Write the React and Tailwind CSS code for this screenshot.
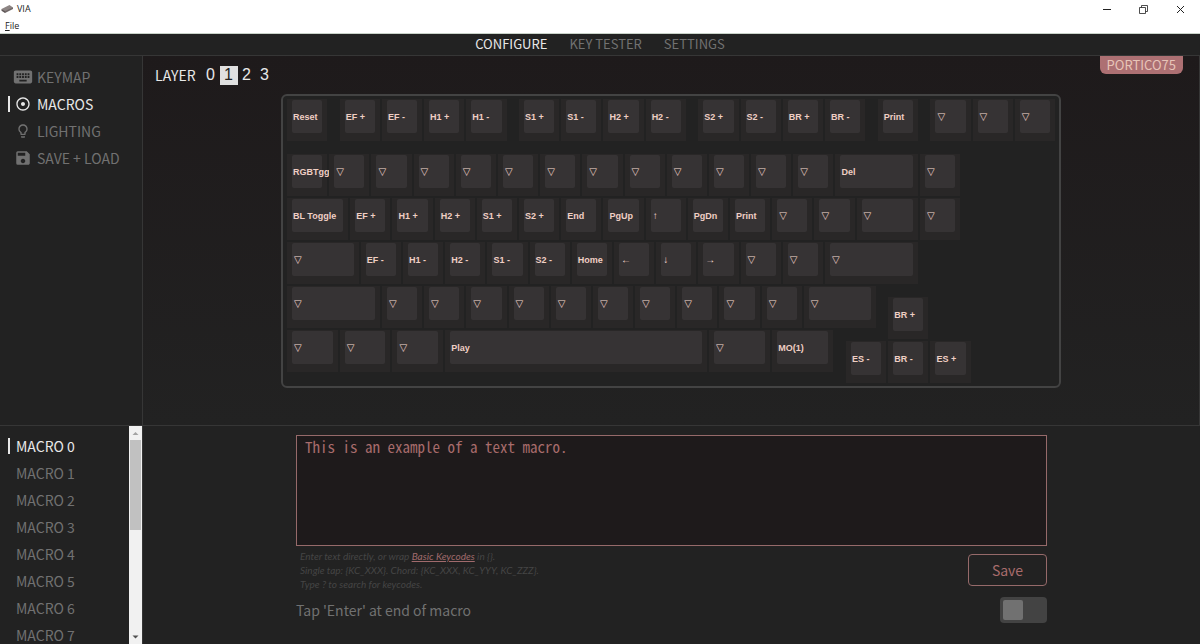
import React, { useState } from "react";
import { MdAdjust, MdKeyboard, MdLightbulbOutline, MdSave } from "react-icons/md";

const TABS = ["Configure", "Key Tester", "Settings"];

const MENU = [
  { id: "keymap", label: "Keymap", icon: MdKeyboard, iconClass: "size-[22px] shrink-0" },
  { id: "macros", label: "Macros", icon: MdAdjust, iconClass: "size-4 shrink-0" },
  { id: "lighting", label: "Lighting", icon: MdLightbulbOutline, iconClass: "size-4 shrink-0" },
  { id: "save", label: "Save + Load", icon: MdSave, iconClass: "size-[18px] shrink-0" },
];

const LAYERS = [0, 1, 2, 3];
const MACROS = [0, 1, 2, 3, 4, 5, 6, 7];

// Rows are measured in quarter key units: [start x, start y, keys].
// A key is a legend (1u) or a [legend, width] pair.
const BLANK = "▽";
const SYMBOLS = [BLANK, "↑", "↓", "←", "→"];
const KEY_GROUPS = [
  [0, 0, ["Reset"]],
  [5, 0, ["EF +", "EF -", "H1 +", "H1 -"]],
  [22, 0, ["S1 +", "S1 -", "H2 +", "H2 -"]],
  [39, 0, ["S2 +", "S2 -", "BR +", "BR -"]],
  [56, 0, ["Print"]],
  [61, 0, [BLANK, BLANK, BLANK]],
  [0, 5, ["RGBTgg", ...Array(12).fill(BLANK), ["Del", 8], BLANK]],
  [
    0,
    9,
    [
      ["BL Toggle", 6],
      "EF +",
      "H1 +",
      "H2 +",
      "S1 +",
      "S2 +",
      "End",
      "PgUp",
      "↑",
      "PgDn",
      "Print",
      BLANK,
      BLANK,
      [BLANK, 6],
      BLANK,
    ],
  ],
  [
    0,
    13,
    [
      [BLANK, 7],
      "EF -",
      "H1 -",
      "H2 -",
      "S1 -",
      "S2 -",
      "Home",
      "←",
      "↓",
      "→",
      BLANK,
      BLANK,
      [BLANK, 9],
    ],
  ],
  [0, 17, [[BLANK, 9], ...Array(10).fill(BLANK), [BLANK, 7]]],
  [57, 18, ["BR +"]],
  [0, 21, [[BLANK, 5], [BLANK, 5], [BLANK, 5], ["Play", 25], [BLANK, 6], ["MO(1)", 6]]],
  [53, 22, ["ES -", "BR -", "ES +"]],
];

const KEYS = KEY_GROUPS.flatMap(([startX, y, keys]) => {
  let x = startX;
  return keys.map((key) => {
    const [legend, width] = Array.isArray(key) ? key : [key, 4];
    const placed = { legend, width, x, y };
    x += width;
    return placed;
  });
});

const TitleBar = () => (
  <header className="h-[34px] shrink-0 border-b border-[#c9d3c9] bg-white font-['Open_Sans',sans-serif] text-[9px] text-[#222]">
    <div className="flex h-[18px] items-center justify-between pl-px">
      <div className="flex items-center gap-1">
        <svg viewBox="0 0 12 10" className="h-[10px] w-3" aria-hidden="true">
          <path d="M0.5 5 8.5 1 12 3.5 4 8.5Z" fill="#8d8584" />
          <path d="M0.5 5 4 7.2V9L0.5 6.8Z" fill="#5d5556" />
          <path d="M4 7.2 12 3.2V5L4 9Z" fill="#6f6767" />
        </svg>
        <span>VIA</span>
      </div>
      <div className="flex items-center gap-7 pr-[15px]">
        <button type="button" aria-label="Minimize">
          <svg viewBox="0 0 9 9" className="size-[9px]" stroke="#222">
            <path d="M1 4.5h8" />
          </svg>
        </button>
        <button type="button" aria-label="Restore">
          <svg viewBox="0 0 9 9" className="size-[9px]" fill="none" stroke="#222">
            <path d="M0.5 2.500h6v6h-6zM2.500 2.500v-2h6v6h-2" strokeWidth="0.8" />
          </svg>
        </button>
        <button type="button" aria-label="Close">
          <svg viewBox="0 0 9 9" className="size-[9px]" stroke="#222">
            <path d="M1 1l7 7M8 1l-7 7" />
          </svg>
        </button>
      </div>
    </div>
    <button type="button" className="block h-[15px] px-[5px] leading-[15px]">
      <span className="underline">F</span>ile
    </button>
  </header>
);

const Key = ({ legend, width, x, y }) => (
  <button
    type="button"
    className="m-px bg-[#292727] px-[5px] pt-px pb-[8px] text-left"
    style={{ gridColumn: `${x + 1} / span ${width}`, gridRow: `${y + 1} / span 4` }}
  >
    <span
      className={
        SYMBOLS.includes(legend)
          ? "block h-[33px] rounded-xs bg-[#363334] pl-[2px] font-['Liberation_Sans','DejaVu_Sans',sans-serif] text-[10px] leading-[33px] font-bold text-[#f8ddd2]"
          : "block h-[33px] rounded-xs bg-[#363334] pl-px font-['Liberation_Sans',sans-serif] text-[9px] leading-[34px] font-bold whitespace-nowrap text-[#f0cfc4]"
      }
    >
      {legend}
    </span>
  </button>
);

const Board = () => (
  <div className="grid w-full max-w-[780px] auto-rows-[11px] grid-cols-[repeat(73,minmax(0,1fr))] rounded-md border-2 border-[#434343] bg-[#222] px-[3px] py-[2px]">
    {KEYS.map((key) => (
      <Key key={`${key.x}-${key.y}`} {...key} />
    ))}
  </div>
);

const MenuRow = ({ selected, onClick, children }) => (
  <li className="flex h-[27px] items-center">
    <button
      type="button"
      onClick={onClick}
      className={
        selected
          ? "flex h-4 items-center border-l-2 border-[#e8e8e8] pl-1.5 text-[#e8e8e8]"
          : "flex h-4 items-center border-l-2 border-transparent pl-1.5 text-[#717171]"
      }
    >
      {children}
    </button>
  </li>
);

const Scrollbar = () => (
  <div className="flex w-[13px] shrink-0 flex-col items-center bg-[#f1f1f1]" aria-hidden="true">
    <svg viewBox="0 0 13 14" className="h-[14px] w-[13px] shrink-0" fill="#a3a3a3">
      <path d="M3.5 9h6L6.5 6Z" />
    </svg>
    <div className="h-[90px] w-[11px] bg-[#c1c1c1]" />
    <svg viewBox="0 0 13 14" className="mt-auto h-[14px] w-[13px] shrink-0" fill="#505050">
      <path d="M3.5 5.5h6L6.5 8.5Z" />
    </svg>
  </div>
);

const MacroEditor = () => {
  const [text, setText] = useState("This is an example of a text macro.");
  const [tapEnter, setTapEnter] = useState(false);

  return (
    <form
      onSubmit={(event) => event.preventDefault()}
      className="mx-auto w-full max-w-[751px] pt-[9px]"
    >
      <textarea
        aria-label="Macro text"
        spellCheck={false}
        value={text}
        onChange={(event) => setText(event.target.value)}
        className="block h-[111px] w-full resize-none border border-[#966a6a] bg-[#1e1a1b] px-2 py-[3px] font-['Noto_Sans_Mono_CJK_JP','Liberation_Mono',monospace] text-[15px] leading-4 text-[#a86c6c] outline-none"
      />
      <div className="flex items-start justify-between pt-[3px]">
        <p className="pl-1 font-['Lato',sans-serif] text-[10px] leading-[14px] text-[#454545] italic">
          Enter text directly, or wrap{" "}
          <a href="#keycodes" className="text-[#a06a6c] underline">
            Basic Keycodes
          </a>{" "}
          in {"{}"}.
          <br />
          Single tap: {"{KC_XXX}"}. Chord: {"{KC_XXX, KC_YYY, KC_ZZZ}"}.
          <br />
          Type ? to search for keycodes.
        </p>
        <button
          type="submit"
          className="mt-[5px] h-8 w-[79px] rounded-sm border border-[#966a6a] text-[14px] text-[#a86c6c]"
        >
          Save
        </button>
      </div>
      <div className="flex items-center justify-between pt-[6px]">
        <label htmlFor="tap-enter" className="text-[14px] text-[#717171]">
          Tap &apos;Enter&apos; at end of macro
        </label>
        <input
          id="tap-enter"
          type="checkbox"
          checked={tapEnter}
          onChange={(event) => setTapEnter(event.target.checked)}
          className="flex h-[26px] w-[47px] appearance-none items-center rounded-sm bg-[#434343] px-[3px] before:size-5 before:rounded-xs before:bg-[#717171] checked:justify-end"
        />
      </div>
    </form>
  );
};

const App = () => {
  const [tab, setTab] = useState("Configure");
  const [menu, setMenu] = useState("macros");
  const [layer, setLayer] = useState(1);
  const [macro, setMacro] = useState(0);

  return (
    <div className="flex h-screen flex-col overflow-hidden bg-[#222] font-['Noto_Sans_CJK_JP','Noto_Sans',sans-serif] text-[14px] leading-4">
      <TitleBar />
      <nav className="flex h-[22px] shrink-0 items-start justify-center gap-[22px] border-b border-[#363636] pt-[2px] text-[13px]">
        {TABS.map((name) => (
          <button
            key={name}
            type="button"
            onClick={() => setTab(name)}
            className={name === tab ? "text-[#e8e8e8] uppercase" : "text-[#717171] uppercase"}
          >
            {name}
          </button>
        ))}
      </nav>

      <section className="flex shrink-0 border-b border-[#363636]">
        <ul className="w-[143px] shrink-0 border-r border-[#363636] pt-[7px] pl-2">
          {MENU.map(({ id, label, icon: Icon, iconClass }) => (
            <MenuRow key={id} selected={id === menu} onClick={() => setMenu(id)}>
              <span className="mr-[7px] flex w-[14px] justify-center">
                <Icon className={iconClass} />
              </span>
              <span className="uppercase">{label}</span>
            </MenuRow>
          ))}
        </ul>
        <main className="min-w-0 flex-1 border-r border-[#363636] bg-linear-to-b from-[#1e1a1b] to-[#222] pb-[37px]">
          <div className="flex h-[38px] items-start justify-between pr-4 pl-3">
            <div className="flex h-[38px] items-center text-[#e8e8e8]">
              <span className="mr-1.5">LAYER</span>
              {LAYERS.map((index) => (
                <button
                  key={index}
                  type="button"
                  onClick={() => setLayer(index)}
                  className={
                    index === layer
                      ? "h-[19px] w-[18px] bg-[#e0e0e0] font-['Liberation_Sans',sans-serif] text-[16px] text-[#222]"
                      : "h-[19px] w-[18px] font-['Liberation_Sans',sans-serif] text-[16px]"
                  }
                >
                  {index}
                </button>
              ))}
            </div>
            <span className="rounded-b-md bg-[#ad7073] px-[7px] py-px text-[13px] text-[#e8c4b8]">
              PORTICO75
            </span>
          </div>
          <div className="flex justify-center">
            <Board />
          </div>
        </main>
      </section>

      <section className="flex min-h-0 flex-1">
        <div className="flex w-[143px] shrink-0 border-r border-[#363636]">
          <ul className="flex-1 overflow-hidden pt-[6px] pl-2">
            {MACROS.map((index) => (
              <MenuRow key={index} selected={index === macro} onClick={() => setMacro(index)}>
                MACRO {index}
              </MenuRow>
            ))}
          </ul>
          <Scrollbar />
        </div>
        <MacroEditor />
      </section>
    </div>
  );
};

export default App;
